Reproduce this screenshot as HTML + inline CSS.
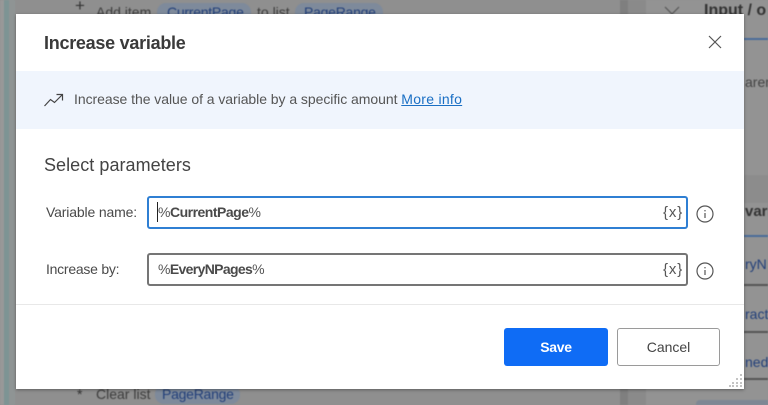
<!DOCTYPE html>
<html><head><meta charset="utf-8">
<style>
html,body{margin:0;padding:0}
body{width:768px;height:405px;overflow:hidden;position:relative;background:#8f8f8f;font-family:"Liberation Sans","DejaVu Sans",sans-serif}
.a{position:absolute;white-space:nowrap}
.chip{position:absolute;background:#7e8a9b;border-radius:9px;height:19px}
#bg{position:absolute;left:0;top:0;width:768px;height:405px;filter:blur(.6px)}
#fg{position:absolute;left:0;top:0;width:768px;height:405px;filter:blur(.25px)}
</style></head><body>
<div id="bg">
<!-- dimmed background -->
<div class="a" style="left:0;top:0;width:4px;height:405px;background:#989898"></div>
<div class="a" style="left:4px;top:0;width:5px;height:405px;background:#7d9494"></div>
<div class="a" style="left:9px;top:0;width:6px;height:405px;background:#8f9494"></div>
<div class="a" style="left:620px;top:0;width:8px;height:405px;background:#7f7f7f"></div>
<div class="a" style="left:628px;top:0;width:18px;height:405px;background:#8a8a8a"></div>
<div class="a" style="left:646px;top:0;width:122px;height:405px;background:#939393"></div>
<div class="a" style="left:744px;top:38px;width:24px;height:2px;background:#4a6c9a"></div>
<div class="a" style="left:744px;top:175px;width:24px;height:28px;background:#8c8c8c"></div>
<div class="a" style="left:744px;top:235px;width:24px;height:2px;background:#4a6c9a"></div>
<div class="a" style="left:744px;top:284px;width:24px;height:2px;background:#555"></div>
<div class="a" style="left:744px;top:331px;width:24px;height:2px;background:#555"></div>
<div class="a" style="left:744px;top:378px;width:24px;height:2px;background:#555"></div>
<div class="a" style="left:696px;top:400px;width:72px;height:5px;background:#7e8794;border-radius:4px 0 0 0"></div>
<div class="chip" style="left:157px;top:3px;width:94px"></div>
<div class="chip" style="left:295px;top:3px;width:88px"></div>
<div class="chip" style="left:155px;top:385px;width:85px"></div>
<div class="a" style="left:75px;top:-4px;font-size:17px;color:#333">+</div>
<div class="a" style="left:96px;top:4px;font-size:14px;color:#3d3d3d">Add item</div>
<div class="a" style="left:167px;top:4px;font-size:14px;letter-spacing:-.25px;color:#23407a">CurrentPage</div>
<div class="a" style="left:257px;top:4px;font-size:14px;color:#3d3d3d">to list</div>
<div class="a" style="left:304px;top:4px;font-size:14px;letter-spacing:-.25px;color:#23407a">PageRange</div>
<div class="a" style="left:704px;top:2px;font-size:16px;font-weight:bold;color:#333">Input / o</div>
<div class="a" style="left:745px;top:74px;font-size:14px;color:#444">aren</div>
<div class="a" style="left:745px;top:203px;font-size:15px;font-weight:bold;color:#333">vari</div>
<div class="a" style="left:745px;top:256px;font-size:14px;color:#23407a">ryN</div>
<div class="a" style="left:745px;top:306px;font-size:14px;color:#23407a">racte</div>
<div class="a" style="left:745px;top:354px;font-size:14px;color:#23407a">nedT</div>
<div class="a" style="left:77px;top:386px;font-size:14px;color:#333">*</div>
<div class="a" style="left:96px;top:386px;font-size:14px;color:#3d3d3d">Clear list</div>
<div class="a" style="left:162px;top:386px;font-size:14px;letter-spacing:-.25px;color:#23407a">PageRange</div>
<svg class="a" style="left:664px;top:6px" width="16" height="10" viewBox="0 0 16 10"><path d="M1 1 L8 8 L15 1" fill="none" stroke="#555" stroke-width="1.2"/></svg>
</div>
<div id="fg">
<!-- dialog -->
<div class="a" style="left:16px;top:14px;width:728px;height:375px;background:#fff;box-shadow:0 1px 3px rgba(0,0,0,.35)"></div>
<div class="a" style="left:44px;top:33px;font-size:18px;font-weight:bold;letter-spacing:-.27px;color:#3a3a3a">Increase variable</div>
<svg class="a" style="left:708px;top:35px" width="14" height="14" viewBox="0 0 14 14"><path d="M1 1 L13 13 M13 1 L1 13" stroke="#555" stroke-width="1.2" fill="none"/></svg>
<div class="a" style="left:16px;top:71px;width:728px;height:58px;background:#f0f5fd"></div>
<svg class="a" style="left:44px;top:93px" width="20" height="14" viewBox="0 0 20 14"><path d="M0.5 13 L6.5 6.5 L10.5 9.5 L18 2 M12.5 1.5 H18.5 V7.5" fill="none" stroke="#444" stroke-width="1.2"/></svg>
<div class="a" style="left:74px;top:91px;font-size:14px;letter-spacing:-.05px;color:#555">Increase the value of a variable by a specific amount <span style="color:#1a6fc4;text-decoration:underline;letter-spacing:.28px">More info</span></div>
<div class="a" style="left:44px;top:155px;font-size:18px;letter-spacing:.05px;color:#444">Select parameters</div>
<div class="a" style="left:46px;top:204px;font-size:14px;letter-spacing:-.15px;color:#4a4a4a">Variable name:</div>
<div class="a" style="left:46px;top:261px;font-size:14px;letter-spacing:-.25px;color:#4a4a4a">Increase by:</div>

<div class="a" style="left:147px;top:196px;width:537px;height:29px;border:2px solid #2f7fd3;border-radius:3px;background:#fff"></div>
<div class="a" style="left:157px;top:202px;width:1px;height:20px;background:#222"></div>
<div class="a" style="left:158px;top:204px;font-size:14px;letter-spacing:-.5px;color:#555">%<b style="color:#4a4a4a">CurrentPage</b>%</div>
<div class="a" style="left:663px;top:204px;font-size:15px;letter-spacing:.9px;color:#555">{x}</div>
<svg class="a" style="left:696px;top:205px" width="18" height="18" viewBox="0 0 18 18"><circle cx="9" cy="9" r="8" fill="none" stroke="#555" stroke-width="1.2"/><path d="M9 8 V13 M9 5 V6.4" stroke="#555" stroke-width="1.2"/></svg>

<div class="a" style="left:147px;top:253px;width:537px;height:29px;border:2px solid #757575;border-radius:3px;background:#fff"></div>
<div class="a" style="left:158px;top:261px;font-size:14px;letter-spacing:-.65px;color:#555">%<b style="color:#4a4a4a">EveryNPages</b>%</div>
<div class="a" style="left:663px;top:261px;font-size:15px;letter-spacing:.9px;color:#555">{x}</div>
<svg class="a" style="left:696px;top:262px" width="18" height="18" viewBox="0 0 18 18"><circle cx="9" cy="9" r="8" fill="none" stroke="#555" stroke-width="1.2"/><path d="M9 8 V13 M9 5 V6.4" stroke="#555" stroke-width="1.2"/></svg>

<div class="a" style="left:16px;top:304px;width:728px;height:1px;background:#e8e8e8"></div>
<div class="a" style="left:504px;top:328px;width:104px;height:38px;background:#0f6cf5;border-radius:3px;color:#fff;font-size:14px;font-weight:bold;letter-spacing:-.3px;line-height:38px;text-align:center">Save</div>
<div class="a" style="left:617px;top:328px;width:101px;height:36px;border:1px solid #9a9a9a;border-radius:3px;background:#fff;color:#444;font-size:14px;line-height:37px;text-align:center">Cancel</div>
<svg class="a" style="left:728px;top:373px" width="15" height="15" viewBox="0 0 15 15"><g fill="#c4c4c4"><rect x="12" y="1" width="2" height="2"/><rect x="12" y="5" width="2" height="2"/><rect x="8" y="5" width="2" height="2"/><rect x="12" y="9" width="2" height="2"/><rect x="8" y="9" width="2" height="2"/><rect x="4" y="9" width="2" height="2"/><rect x="12" y="12" width="2" height="2"/><rect x="8" y="12" width="2" height="2"/><rect x="4" y="12" width="2" height="2"/><rect x="1" y="12" width="2" height="2"/></g></svg>
</div>
</body></html>
